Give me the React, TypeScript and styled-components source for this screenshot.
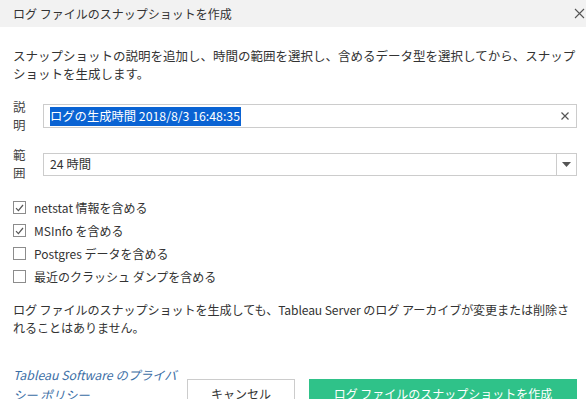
import styled, { createGlobalStyle } from "styled-components";

const GlobalStyle = createGlobalStyle`
  html, body {
    margin: 0;
    padding: 0;
    background: #ffffff;
  }
  body {
    font-family: "Noto Sans CJK JP", "Noto Sans", sans-serif;
    color: #333333;
    overflow: hidden;
  }
`;

const Dialog = styled.div`
  width: 586px;
  height: 399px;
  overflow: hidden;
  background: #fff;
`;

const Header = styled.div`
  height: 27px;
  background: #f2f2f2;
  display: flex;
  align-items: center;
  justify-content: space-between;
  padding: 0 1px 0 13px;
`;

const Title = styled.h1`
  margin: 0;
  font-size: 12px;
  font-weight: 400;
  color: #333;
  line-height: 27px;
`;

const CloseButton = styled.button`
  border: 0;
  background: none;
  padding: 0;
  width: 11px;
  height: 11px;
  display: flex;
  cursor: pointer;
`;

const Body = styled.div`
  padding: 0 9px 0 13px;
`;

const Paragraph = styled.p<{ $top: number; $tight?: boolean }>`
  margin: ${(p) => p.$top}px 0 0;
  font-size: ${(p) => (p.$tight ? "12.1px" : "12.5px")};
  letter-spacing: ${(p) => (p.$tight ? "-0.1px" : "0")};
  line-height: 18px;
  color: #333;
`;

const FieldRow = styled.div<{ $top: number }>`
  display: grid;
  grid-template-columns: 30px 1fr;
  align-items: center;
  margin-top: ${(p) => p.$top}px;
`;

const FieldLabel = styled.label`
  width: 14px;
  font-size: 12.5px;
  line-height: 18px;
  color: #444;
`;

const InputBox = styled.div`
  position: relative;
  height: 24px;
  border: 1px solid #cccccc;
  box-sizing: border-box;
  display: flex;
  align-items: center;
  padding-left: 6px;
  font-size: 12.3px;
  background: #fff;
`;

const Selected = styled.span`
  background: #0a63d3;
  color: #fff;
  line-height: 19px;
  padding-right: 1px;
`;

const ClearIcon = styled.span`
  position: absolute;
  right: 7px;
  top: 50%;
  transform: translateY(-50%);
  display: flex;
`;

const SelectBox = styled(InputBox)`
  height: 23px;
  color: #333;
`;

const SelectArrow = styled.span`
  position: absolute;
  right: 0;
  top: 0;
  bottom: 0;
  width: 19px;
  border-left: 1px solid #cccccc;
  display: flex;
  align-items: center;
  justify-content: center;
`;

const CheckList = styled.div`
  margin-top: 14px;
  display: flex;
  flex-direction: column;
`;

const CheckRow = styled.label`
  height: 23px;
  display: flex;
  align-items: center;
  gap: 8px;
  font-size: 12px;
  color: #333;
`;

const Box = styled.span`
  width: 13px;
  height: 13px;
  box-sizing: border-box;
  border: 1px solid #8c8c8c;
  background: #fff;
  display: flex;
  align-items: center;
  justify-content: center;
`;

const Footer = styled.div`
  display: flex;
  align-items: flex-start;
  margin-top: 28px;
`;

const PrivacyLink = styled.a`
  width: 166px;
  font-size: 12.3px;
  font-style: italic;
  line-height: 20px;
  color: #3b6ea5;
  text-decoration: none;
  margin-right: 8px;
`;

const Button = styled.button<{ $primary?: boolean }>`
  margin-top: 14px;
  height: 28px;
  box-sizing: border-box;
  font-family: inherit;
  font-size: 12px;
  border: 1px solid ${(p) => (p.$primary ? "#2fc289" : "#cccccc")};
  background: ${(p) => (p.$primary ? "#2fc289" : "#ffffff")};
  color: ${(p) => (p.$primary ? "#ffffff" : "#333333")};
  padding: 0;
`;

const CancelButton = styled(Button)`
  width: 108px;
  margin-right: 14px;
`;

const CreateButton = styled(Button)`
  flex: 1;
`;

const options = [
  { label: "netstat 情報を含める", checked: true },
  { label: "MSInfo を含める", checked: true },
  { label: "Postgres データを含める", checked: false },
  { label: "最近のクラッシュ ダンプを含める", checked: false },
];

const App = () => {
  return (
    <Dialog>
      <GlobalStyle />
      <Header>
        <Title>ログ ファイルのスナップショットを作成</Title>
        <CloseButton aria-label="閉じる">
          <svg width="11" height="11" viewBox="0 0 11 11">
            <path d="M1 1 L10 10 M10 1 L1 10" stroke="#555" strokeWidth="1.1" />
          </svg>
        </CloseButton>
      </Header>
      <Body>
        <Paragraph $top={20}>
          スナップショットの説明を追加し、時間の範囲を選択し、含めるデータ型を選択してから、スナップショットを生成します。
        </Paragraph>

        <FieldRow $top={15}>
          <FieldLabel>説明</FieldLabel>
          <InputBox>
            <Selected>ログの生成時間 2018/8/3 16:48:35</Selected>
            <ClearIcon>
              <svg width="8" height="8" viewBox="0 0 8 8">
                <path d="M0.5 0.5 L7.5 7.5 M7.5 0.5 L0.5 7.5" stroke="#555" strokeWidth="1.2" />
              </svg>
            </ClearIcon>
          </InputBox>
        </FieldRow>

        <FieldRow $top={12}>
          <FieldLabel>範囲</FieldLabel>
          <SelectBox>
            24 時間
            <SelectArrow>
              <svg width="9" height="5" viewBox="0 0 9 5">
                <path d="M0 0 H9 L4.5 5 Z" fill="#555" />
              </svg>
            </SelectArrow>
          </SelectBox>
        </FieldRow>

        <CheckList>
          {options.map((o) => (
            <CheckRow key={o.label}>
              <Box>
                {o.checked && (
                  <svg width="9" height="8" viewBox="0 0 9 8">
                    <path d="M1 4.2 L3.4 6.6 L8 1" stroke="#555" strokeWidth="1.2" fill="none" />
                  </svg>
                )}
              </Box>
              {o.label}
            </CheckRow>
          ))}
        </CheckList>

        <Paragraph $top={13} $tight>
          ログ ファイルのスナップショットを生成しても、Tableau Server のログ アーカイブが変更または削除されることはありません。
        </Paragraph>

        <Footer>
          <PrivacyLink href="#">Tableau Software のプライバシー ポリシー</PrivacyLink>
          <CancelButton>キャンセル</CancelButton>
          <CreateButton $primary>ログ ファイルのスナップショットを作成</CreateButton>
        </Footer>
      </Body>
    </Dialog>
  );
};

export default App;
